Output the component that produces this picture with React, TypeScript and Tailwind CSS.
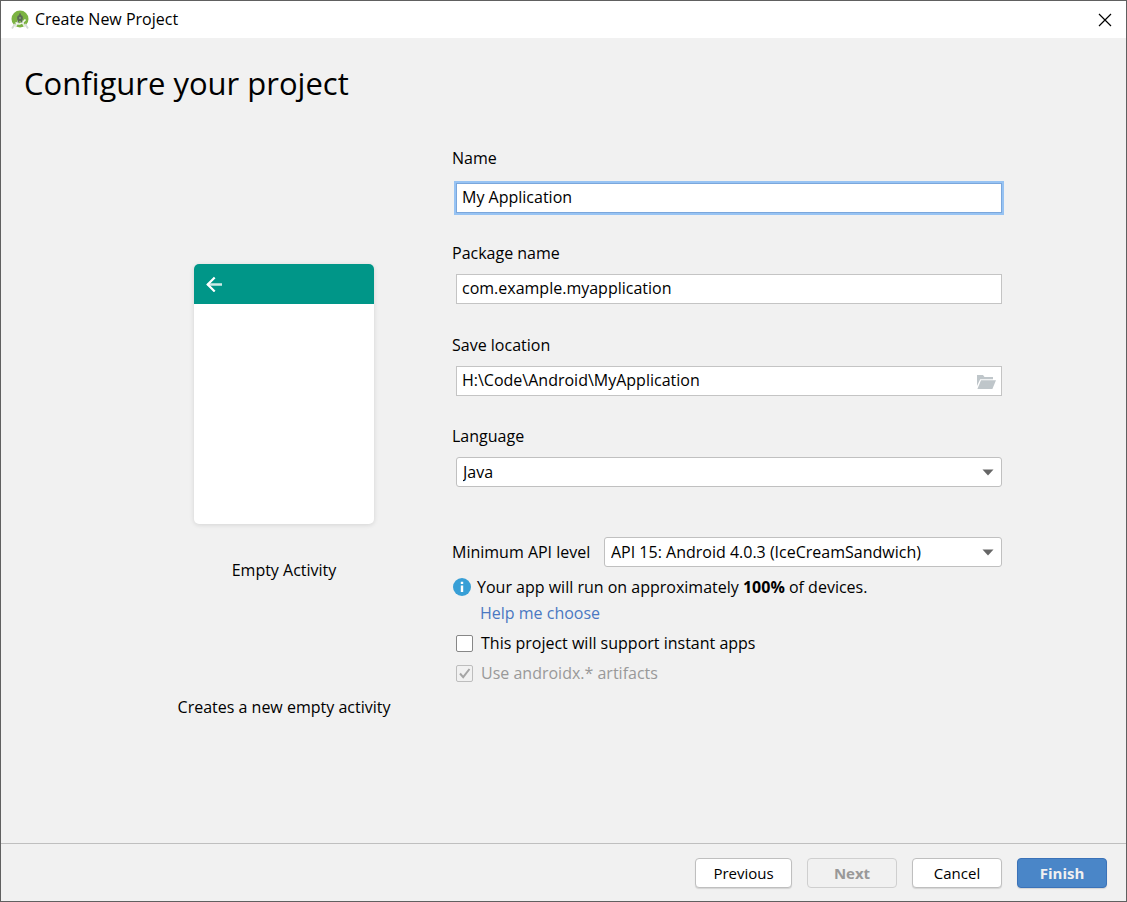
import { useState } from "react";
import type { ReactNode } from "react";

const fieldClass =
  "block h-[30px] w-full border border-[#c4c4c4] bg-white pb-0.5 pl-[5px] text-black outline-none";

const selectClass =
  "block h-[30px] w-full appearance-none rounded-[3px] border border-[#c0c0c0] bg-white pl-1.5 pr-8 text-black outline-none";

const buttonClass = "h-[30px] rounded border shadow-[0_1px_1px_rgba(0,0,0,0.12)]";

const StudioLogo = () => (
  <svg width="18" height="20" viewBox="0 0 18 20" aria-hidden="true">
    <circle cx="9" cy="9" r="8.5" fill="#7cb342" />
    <path d="M1 18.5 4 14M17 18.5 14 14" stroke="#d5d9d5" strokeWidth="1.8" />
    <path d="M7.5 11 4 17M10.5 11 14 17" stroke="#e6ede0" strokeWidth="1.8" />
    <path d="M4.5 12.5Q9 16.5 14.5 9.5" stroke="#f5f8f2" strokeWidth="1.6" fill="none" />
    <path d="M9 3.5v2.5" stroke="#5b6b55" strokeWidth="1.8" />
    <circle cx="9" cy="8" r="2.9" fill="#5b6b55" />
    <circle cx="9" cy="8" r="0.9" fill="#8fae7c" />
    <path d="M7.8 10 7 12.5M10.2 10 11 12.5" stroke="#5b6b55" strokeWidth="1.3" />
  </svg>
);

const CaretDown = () => (
  <svg
    className="pointer-events-none absolute right-2 top-3"
    width="12"
    height="7"
    viewBox="0 0 12 7"
    aria-hidden="true"
  >
    <path d="M0.5 0.5h11L6 6.5z" fill="#666" />
  </svg>
);

const FolderIcon = () => (
  <svg width="20" height="16" viewBox="0 0 20 16" aria-hidden="true">
    <path d="M1 12V1h6l1.5 2H17v2.2H4.2z" fill="#bfc6ca" />
    <path d="M5 6.2h15L16.4 15H1.4z" fill="#bfc6ca" />
  </svg>
);

const InfoIcon = () => (
  <svg className="shrink-0" width="18" height="18" viewBox="0 0 18 18" aria-hidden="true">
    <circle cx="9" cy="9" r="9" fill="#389fd6" />
    <path d="M7.8 3.8h2.4v2.3H7.8zM7.8 7.4h2.4v6.6H7.8z" fill="#fff" />
  </svg>
);

type FieldProps = {
  id: string;
  label: string;
  className: string;
  children: ReactNode;
};

const Field = ({ id, label, className, children }: FieldProps) => (
  <div className={`flex flex-col ${className}`}>
    <label htmlFor={id} className="self-start leading-6">
      {label}
    </label>
    <div className="relative pl-1">{children}</div>
  </div>
);

const ActivityPreview = () => (
  <div className="flex h-[260px] w-[180px] flex-col overflow-hidden rounded-[5px] bg-white shadow-[0_1px_5px_rgba(0,0,0,0.12)]">
    <div className="flex h-10 items-center bg-[#009688] pl-3">
      <svg width="17" height="16" viewBox="0 0 17 16" fill="none" aria-hidden="true">
        <path d="M1.5 8.5H16" stroke="#cfeae7" strokeWidth="2.6" />
        <path d="M8.7 1.5 1.7 8.5l7 7" stroke="#fff" strokeWidth="2.2" />
      </svg>
    </div>
  </div>
);

const App = () => {
  const [name, setName] = useState("My Application");
  const [packageName, setPackageName] = useState("com.example.myapplication");
  const [location, setLocation] = useState("H:\\Code\\Android\\MyApplication");
  const [instant, setInstant] = useState(false);

  return (
    <div className="flex min-h-screen flex-col border border-[#606060] bg-[#f1f1f1] font-['Open_Sans','Noto_Sans',sans-serif] text-base leading-6 text-black">
      <header className="flex h-[37px] items-center bg-white pl-2.5 pr-3.5">
        <StudioLogo />
        <span className="ml-1.5 flex-1 pb-0.5">Create New Project</span>
        <button type="button" aria-label="Close">
          <svg width="14" height="14" viewBox="0 0 14 14" aria-hidden="true">
            <path d="m1 1 12 12M13 1 1 13" stroke="#000" strokeWidth="1.2" />
          </svg>
        </button>
      </header>

      <h1 className="ml-[23px] mt-[25px] text-[31px] leading-10">Configure your project</h1>

      <main className="flex flex-1 pb-8">
        <section className="ml-[115px] flex w-[336px] shrink-0 flex-col items-center pt-[161px]">
          <ActivityPreview />
          <h2 className="mt-[34px]">Empty Activity</h2>
          <p className="mt-[113px]">Creates a new empty activity</p>
        </section>

        <form className="mr-[124px] min-w-0 flex-1 pt-[43px]">
          <Field id="name" label="Name" className="gap-[13px]">
            <input
              id="name"
              className="block h-[30px] w-full border border-[#7ba7dc] bg-white pb-0.5 pl-[5px] text-black outline-none ring-2 ring-[#97c3f3]"
              value={name}
              onChange={e => setName(e.target.value)}
            />
          </Field>

          <Field id="package" label="Package name" className="mt-7 gap-[9px]">
            <input
              id="package"
              className={fieldClass}
              value={packageName}
              onChange={e => setPackageName(e.target.value)}
            />
          </Field>

          <Field id="location" label="Save location" className="mt-[29px] gap-[9px]">
            <input
              id="location"
              className={fieldClass}
              value={location}
              onChange={e => setLocation(e.target.value)}
            />
            <button type="button" aria-label="Browse" className="absolute right-1.5 top-2">
              <FolderIcon />
            </button>
          </Field>

          <Field id="language" label="Language" className="mt-7 gap-[9px]">
            <select id="language" className={selectClass} defaultValue="Java">
              <option>Java</option>
              <option>Kotlin</option>
            </select>
            <CaretDown />
          </Field>

          <div className="mt-[50px] flex items-center">
            <label htmlFor="api" className="w-[152px] shrink-0 whitespace-nowrap">
              Minimum API level
            </label>
            <div className="relative min-w-0 flex-1">
              <select id="api" className={selectClass}>
                <option>API 15: Android 4.0.3 (IceCreamSandwich)</option>
              </select>
              <CaretDown />
            </div>
          </div>

          <div className="mt-2 flex items-center gap-1.5 pl-px">
            <InfoIcon />
            <p className="whitespace-nowrap">
              Your app will run on approximately <b>100%</b> of devices.
            </p>
          </div>
          <a href="#help" className="ml-7 mt-0.5 block w-fit text-[#4a78c2]">
            Help me choose
          </a>

          <label className="mt-1.5 flex w-fit items-center gap-2 pl-1">
            <input
              type="checkbox"
              className="size-[17px] appearance-none rounded-[2px] border border-[#878787] bg-white checked:bg-[#4a86c8]"
              checked={instant}
              onChange={e => setInstant(e.target.checked)}
            />
            This project will support instant apps
          </label>
          <label className="mt-1.5 flex w-fit items-center gap-2 pl-1 text-[#999]">
            <span className="relative flex">
              <input
                type="checkbox"
                className="size-[17px] appearance-none rounded-[2px] border border-[#bdbdbd]"
                checked
                disabled
                readOnly
              />
              <svg
                className="pointer-events-none absolute left-[3px] top-[3px]"
                width="12"
                height="11"
                viewBox="0 0 12 11"
                fill="none"
                aria-hidden="true"
              >
                <path d="m1 5.5 3.2 3.7L10.5 1" stroke="#a5a5a5" strokeWidth="2" />
              </svg>
            </span>
            Use androidx.* artifacts
          </label>
        </form>
      </main>

      <footer className="flex justify-end gap-[15px] border-t border-[#bfbfbf] pb-[13px] pr-[19px] pt-3.5 text-[15px]">
        <button type="button" className={`${buttonClass} w-[97px] border-[#bfbfbf] bg-white`}>
          Previous
        </button>
        <button
          type="button"
          disabled
          className="h-[30px] w-[90px] rounded border border-[#cfcfcf] font-bold text-[#999]"
        >
          Next
        </button>
        <button type="button" className={`${buttonClass} w-[90px] border-[#bfbfbf] bg-white`}>
          Cancel
        </button>
        <button
          type="button"
          className={`${buttonClass} w-[90px] border-[#3b72b8] bg-[#4a86c8] font-bold text-[#f0f0f0]`}
        >
          Finish
        </button>
      </footer>
    </div>
  );
};

export default App;
